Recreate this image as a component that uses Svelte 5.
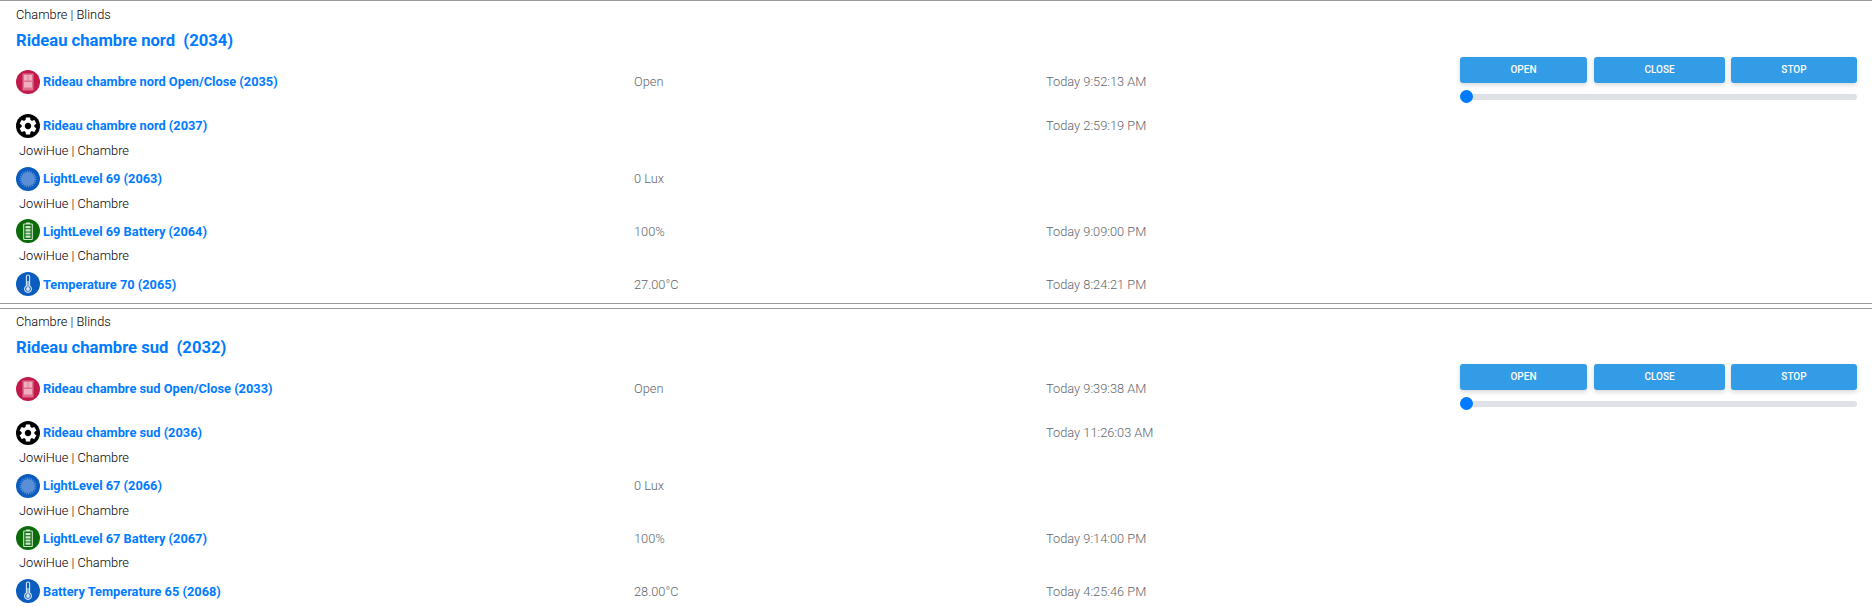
<script>
	const sections = [
		{
			title: 'Rideau chambre nord  (2034)',
			blind: { name: 'Rideau chambre nord Open/Close (2035)', value: 'Open', time: 'Today 9:52:13 AM' },
			motor: { name: 'Rideau chambre nord (2037)', time: 'Today 2:59:19 PM' },
			rows: [
				{ icon: 'light', name: 'LightLevel 69 (2063)', value: '0 Lux', time: '' },
				{ icon: 'battery', name: 'LightLevel 69 Battery (2064)', value: '100%', time: 'Today 9:09:00 PM' },
				{ icon: 'temp', name: 'Temperature 70 (2065)', value: '27.00°C', time: 'Today 8:24:21 PM' }
			]
		},
		{
			title: 'Rideau chambre sud  (2032)',
			blind: { name: 'Rideau chambre sud Open/Close (2033)', value: 'Open', time: 'Today 9:39:38 AM' },
			motor: { name: 'Rideau chambre sud (2036)', time: 'Today 11:26:03 AM' },
			rows: [
				{ icon: 'light', name: 'LightLevel 67 (2066)', value: '0 Lux', time: '' },
				{ icon: 'battery', name: 'LightLevel 67 Battery (2067)', value: '100%', time: 'Today 9:14:00 PM' },
				{ icon: 'temp', name: 'Battery Temperature 65 (2068)', value: '28.00°C', time: 'Today 4:25:46 PM' }
			]
		}
	];
</script>

{#snippet icon(kind)}
	<svg class="icon" viewBox="0 0 24 24" width="24" height="24">
		{#if kind === 'blind'}
			<circle cx="12" cy="12" r="12" fill="#c2194b" />
			<path d="M6.5 3.5h11v17h-11z" fill="#de6f8e" />
			<path d="M8 5h3.6v5.5H8zM12.4 5H16v5.5h-3.6z" fill="#eeb0c1" />
			<path d="M8 12h8v5.5H8z" fill="#eeb0c1" />
		{:else if kind === 'gear'}
			<circle cx="12" cy="12" r="12" fill="#000" />
			<path
				fill="#fff"
				fill-rule="evenodd"
				d="M19.43 12.98c.04-.32.07-.64.07-.98s-.03-.66-.07-.98l2.11-1.65c.19-.15.24-.42.12-.64l-2-3.46c-.12-.22-.39-.3-.61-.22l-2.49 1c-.52-.4-1.08-.73-1.69-.98l-.38-2.65C14.46 2.18 14.25 2 14 2h-4c-.25 0-.46.18-.49.42l-.38 2.65c-.61.25-1.17.59-1.69.98l-2.49-1c-.23-.09-.49 0-.61.22l-2 3.46c-.13.22-.07.49.12.64l2.11 1.65c-.04.32-.07.65-.07.98s.03.66.07.98l-2.11 1.65c-.19.15-.24.42-.12.64l2 3.46c.12.22.39.3.61.22l2.49-1c.52.4 1.08.73 1.69.98l.38 2.65c.03.24.24.42.49.42h4c.25 0 .46-.18.49-.42l.38-2.65c.61-.25 1.17-.59 1.69-.98l2.49 1c.23.09.49 0 .61-.22l2-3.46c.12-.22.07-.49-.12-.64l-2.11-1.65zM12 15.8c-2.1 0-3.8-1.7-3.8-3.8s1.7-3.8 3.8-3.8 3.8 1.7 3.8 3.8-1.7 3.8-3.8 3.8z"
				transform="translate(1.8 1.8) scale(.85)"
			/>
		{:else if kind === 'light'}
			<circle cx="12" cy="12" r="12" fill="#0a5cbf" />
			<circle cx="12" cy="12" r="7" fill="#5a8fd6" />
			<circle cx="12" cy="12" r="7.8" fill="none" stroke="#5a8fd6" stroke-width="1.4" stroke-dasharray="1.1 1.1" />
		{:else if kind === 'battery'}
			<circle cx="12" cy="12" r="12" fill="#0b6b0b" />
			<path d="M10 3.5h4V5h-4z" fill="#cfe6cf" />
			<rect x="7.7" y="5" width="8.6" height="15.5" rx=".6" fill="none" stroke="#cfe6cf" stroke-width="1.1" />
			<path d="M9.5 7h5v2.2h-5zM9.5 10.2h5v2.2h-5zM9.5 13.4h5v2.2h-5zM9.5 16.6h5v2.2h-5z" fill="#cfe6cf" />
		{:else}
			<circle cx="12" cy="12" r="12" fill="#0a5cbf" />
			<path
				d="M10.4 4.6a1.6 1.6 0 0 1 3.2 0v9.4a3.4 3.4 0 1 1-3.2 0z"
				fill="#0a5cbf"
				stroke="#dbe7f7"
				stroke-width="1.1"
			/>
			<circle cx="12" cy="17" r="1.9" fill="#dbe7f7" />
			<path d="M11.4 9h1.2v7h-1.2z" fill="#dbe7f7" />
		{/if}
	</svg>
{/snippet}

{#each sections as section}
	<section class="device">
		<div class="crumb">Chambre | Blinds</div>
		<h2 class="title">{section.title}</h2>
		<div class="row row-blind">
			<a class="name" href="#top">{@render icon('blind')}{section.blind.name}</a>
			<span class="value">{section.blind.value}</span>
			<span class="value">{section.blind.time}</span>
			<div class="controls">
				<div class="buttons">
					<button class="open">OPEN</button>
					<button class="close">CLOSE</button>
					<button class="stop">STOP</button>
				</div>
				<div class="slider"><span class="thumb"></span></div>
			</div>
		</div>
		<div class="row row-motor">
			<a class="name" href="#top">{@render icon('gear')}{section.motor.name}</a>
			<span class="value"></span>
			<span class="value">{section.motor.time}</span>
		</div>
		{#each section.rows as row}
			<div class="sub">JowiHue | Chambre</div>
			<div class="row">
				<a class="name" href="#top">{@render icon(row.icon)}{row.name}</a>
				<span class="value">{row.value}</span>
				<span class="value">{row.time}</span>
			</div>
		{/each}
	</section>
{/each}

<style>
	:global(body) {
		margin: 0;
		background: #fff;
		font-family: Roboto, sans-serif;
	}

	.device {
		padding-left: 16px;
		padding-bottom: 6.75px;
		border-top: 1px solid #999;
		border-bottom: 1px solid #999;
		margin-bottom: 4px;
		font-size: 12.8px;
		font-weight: 300;
	}

	.device:last-child {
		padding-bottom: 0;
		border-bottom: 0;
		margin-bottom: 0;
	}

	.device:last-child .crumb {
		margin-top: -1px;
	}

	.crumb {
		height: 27px;
		line-height: 27px;
		color: #000;
	}

	.title {
		margin: 0;
		height: 25px;
		line-height: 25px;
		font-size: 16.6px;
		font-weight: 700;
		color: #007bff;
		white-space: pre;
	}

	.row {
		display: grid;
		grid-template-columns: 618px 412px 414px 397px;
		grid-template-rows: 24px;
		align-items: center;
		height: 24px;
	}

	.row-blind {
		margin-top: 16.6px;
	}

	.row-motor {
		margin-top: 20.4px;
	}

	.name {
		display: flex;
		align-items: center;
		gap: 3px;
		color: #007bff;
		font-weight: 700;
		text-decoration: none;
	}

	.icon {
		flex: none;
	}

	.value {
		color: #5f666d;
	}

	.sub {
		height: 28.75px;
		line-height: 25px;
		padding-left: 3px;
		color: #000;
	}

	.controls {
		align-self: start;
	}

	.buttons {
		display: flex;
		height: 26px;
		margin-top: -13px;
	}

	button {
		border: 0;
		padding: 0;
		border-radius: 3px;
		background: #339ce6;
		color: #fff;
		font: 500 10px Roboto, sans-serif;
		box-shadow: 0 2px 5px rgba(0, 0, 0, 0.16);
	}

	.open {
		width: 127px;
	}

	.close {
		width: 131px;
		margin: 0 6px 0 7px;
	}

	.stop {
		width: 126px;
	}

	.slider {
		position: relative;
		height: 6px;
		margin-top: 11px;
		border-radius: 3px;
		background: #dee2e6;
	}

	.thumb {
		position: absolute;
		left: 0;
		top: -4px;
		width: 13px;
		height: 13px;
		border-radius: 50%;
		background: #007bff;
	}
</style>
